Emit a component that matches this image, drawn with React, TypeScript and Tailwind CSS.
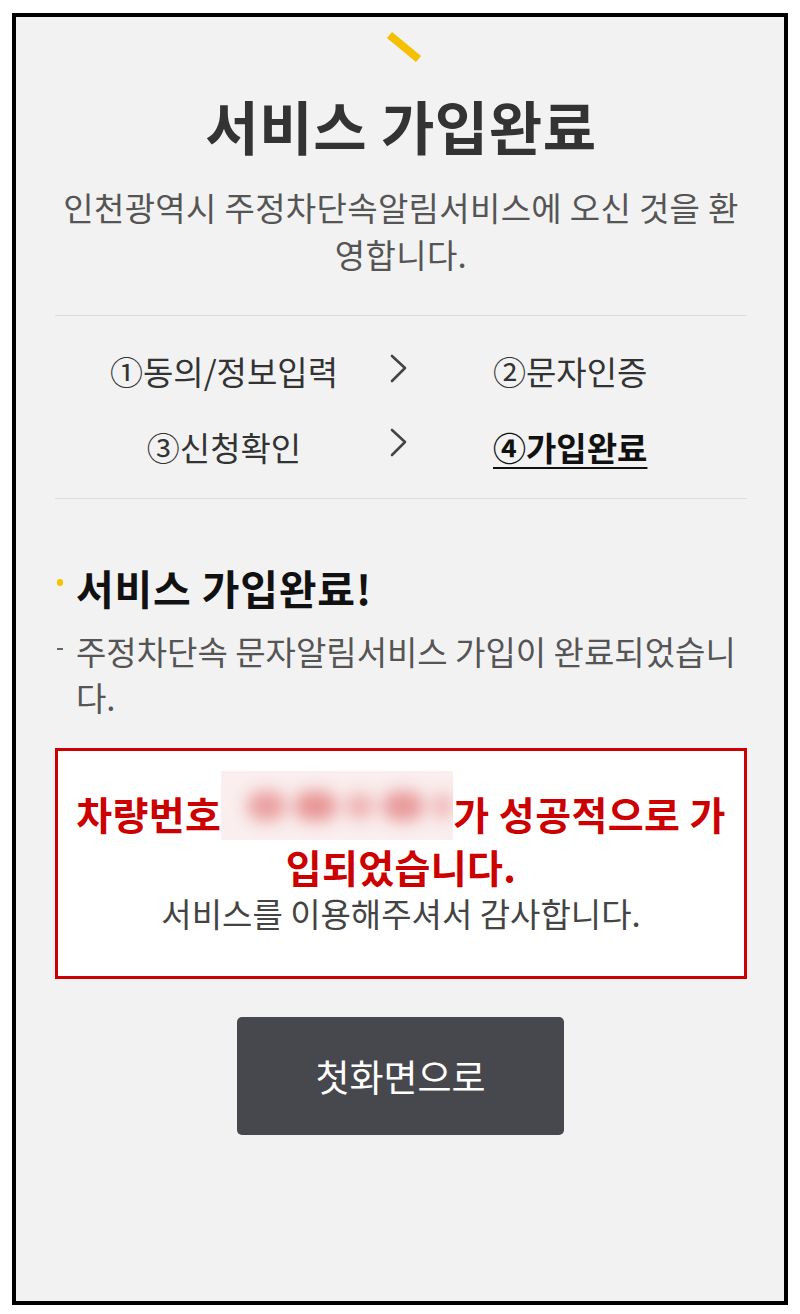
import React from "react";

const FONT = "font-['Noto_Sans_CJK_KR','Noto_Sans',sans-serif]";

function Chevron() {
  return (
    <svg width="20" height="30" viewBox="0 0 20 30" className="block">
      <polyline
        points="3,2 16,14 3,27"
        fill="none"
        stroke="#444"
        strokeWidth="2.6"
        strokeLinecap="round"
        strokeLinejoin="round"
      />
    </svg>
  );
}

function Blurred() {
  return (
    <span className="inline-block align-bottom w-[232px] h-[69px] -mt-[16px] overflow-hidden bg-[#faeeee]">
      <span className="flex items-center h-full pl-[26px] gap-[8px] blur-[8px]">
        <span className="w-[40px] h-[30px] rounded-full bg-[#eaa0a0]" />
        <span className="w-[44px] h-[30px] rounded-full bg-[#e89696]" />
        <span className="w-[30px] h-[26px] rounded-full bg-[#eeb2b2]" />
        <span className="w-[44px] h-[30px] rounded-full bg-[#e89a9a]" />
        <span className="w-[22px] h-[26px] rounded-full bg-[#efb6b6]" />
      </span>
    </span>
  );
}

export default function App() {
  return (
    <div className={`w-[800px] h-[1314px] bg-white pt-[13px] pl-[12px] ${FONT}`}>
      <div className="w-[776px] h-[1292px] border-4 border-black bg-[#f2f2f2] pl-[39px] pr-[37px]">
        {/* yellow mark */}
        <svg width="48" height="33" viewBox="0 0 48 33" className="block mx-auto mt-[13px]">
          <line x1="12.5" y1="5" x2="41.5" y2="29" stroke="#f4c000" strokeWidth="8" />
        </svg>

        <h1 className="mt-[30px] text-center text-[58px] leading-[64px] tracking-[0.01em] font-bold text-[#333]">
          서비스 가입완료
        </h1>

        <p className="mt-[27px] px-[5px] text-center text-[33px] leading-[47px] tracking-[0.01em] text-[#555] break-all">
          인천광역시 주정차단속알림서비스에 오신 것을 환영합니다.
        </p>

        <div className="mt-[37px] border-t border-[#dcdcdc] pt-[35px] pb-[31px]">
          <div className="grid grid-cols-[338px_15px_1fr] gap-y-[36px] text-[33px] leading-[40px] text-[#333]">
            <div className="text-center">①동의/정보입력</div>
            <div className="flex items-center justify-center -mt-[4px]">
              <div className="-ml-[3px]">
                <Chevron />
              </div>
            </div>
            <div className="pl-[85px] whitespace-nowrap">②문자인증</div>

            <div className="text-center">③신청확인</div>
            <div className="flex items-center justify-center -mt-[8px]">
              <div className="-ml-[3px]">
                <Chevron />
              </div>
            </div>
            <div className="pl-[85px] whitespace-nowrap">
              <span className="font-semibold text-[#111] underline decoration-2 underline-offset-[6px]">
                ④가입완료
              </span>
            </div>
          </div>
        </div>

        <div className="border-t border-[#dcdcdc]" />

        <div className="mt-[65px] flex items-start">
          <span className="mt-[15px] ml-[2px] w-[6px] h-[7px] rounded-full bg-[#f5c400] shrink-0" />
          <h2 className="ml-[13px] text-[41px] leading-[46px] tracking-[0.02em] font-bold text-[#111]">
            서비스 가입완료!
          </h2>
        </div>

        <div className="mt-[18px] flex items-start">
          <span className="mt-[20px] ml-[2px] w-[6px] h-[2px] bg-[#666] shrink-0" />
          <p className="ml-[13px] text-[33px] leading-[46px] text-[#555] break-all">
            주정차단속 문자알림서비스 가입이 완료되었습니다.
          </p>
        </div>

        <div className="mt-[28px] h-[231px] border-[3px] border-[#cc0000] bg-white px-[8px] pt-[36px] text-center">
          <p className="text-[39px] leading-[53px] tracking-[0.01em] font-bold text-[#cc0000] break-all">
            차량번호
            <Blurred />
            가 성공적으로 가입되었습니다.
          </p>
          <p className="text-[33px] leading-[40px] text-[#444]">서비스를 이용해주셔서 감사합니다.</p>
        </div>

        <div className="mt-[38px] flex justify-center">
          <button className="w-[327px] h-[118px] rounded-[5px] bg-[#47474e] text-white text-[37px] leading-none -ml-[1px]">
            첫화면으로
          </button>
        </div>
      </div>
    </div>
  );
}
